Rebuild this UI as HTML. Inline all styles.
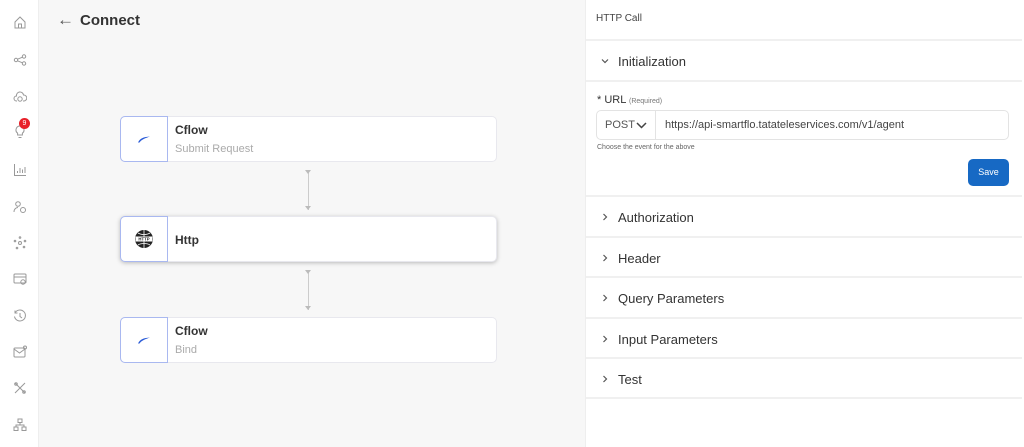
<!DOCTYPE html><html><head><style>
*{box-sizing:border-box;margin:0;padding:0}
body{width:1024px;height:447px;overflow:hidden;font-family:"Liberation Sans",sans-serif;background:#fff;position:relative;color:#333}
.sb{position:absolute;left:0;top:0;width:39px;height:447px;background:#fff;border-right:1px solid #eee}
.sb svg{position:absolute;left:13px;width:14px;height:14px;stroke:#999;fill:none;stroke-width:1}
.cv{position:absolute;left:39px;top:0;width:546px;height:447px;background:#f7f7f7}
.card{position:absolute;left:81px;width:377px;height:46px;background:#fff;border:1px solid #e8e8ee;border-radius:5px}
.card .ic{position:absolute;left:-1px;top:-1px;width:48px;height:46px;border:1px solid #a9b8f0;border-radius:5px 0 0 5px;background:#fff;display:flex;align-items:center;justify-content:center}
.t{position:absolute;left:54px;font-size:12px;color:#333;font-weight:bold}
.s{position:absolute;left:54px;top:26px;font-size:11px;color:#aaa}
.ln{position:absolute;left:269px;width:1px;background:#ccc}
.ln:before,.ln:after{content:"";position:absolute;left:-3px;border-left:3.5px solid transparent;border-right:3.5px solid transparent}
.ln:before{top:0;border-top:4px solid #bbb}
.ln:after{bottom:0;border-top:4px solid #bbb}
.rp{position:absolute;left:585px;top:0;width:439px;height:447px;background:#fff;border-left:1px solid #eee}
.sec{position:absolute;left:0;width:436px;border-top:2px solid #f0f0f0;font-size:13px;color:#333}
.sec span{position:absolute;left:32px}
.chev{position:absolute;left:14px}
</style></head><body>
<div class="sb">
<svg style="top:15px" viewBox="0 0 14 14"><path d="M2 7L7 2l5 5v6H2z"/><path d="M5.5 13V9h3v4"/></svg>
<svg style="top:53px" viewBox="0 0 14 14"><circle cx="3" cy="7" r="1.7"/><circle cx="11" cy="3.5" r="1.7"/><circle cx="11" cy="10.5" r="1.7"/><path d="M4.5 6.2l5-2M4.5 7.8l5 2"/></svg>
<svg style="top:90px" viewBox="0 0 14 14"><path d="M4 11H3.5a2.5 2.5 0 010-5A3.5 3.5 0 0110.5 5 2.5 2.5 0 0111 11H10"/><circle cx="7" cy="9" r="2.2"/></svg>
<svg style="top:125px" viewBox="0 0 14 14"><path d="M7 1a4 4 0 00-2.4 7.2V10h4.8V8.2A4 4 0 007 1zM5.5 12.5h3"/></svg>
<div style="position:absolute;left:19px;top:118px;width:11px;height:11px;border-radius:50%;background:#e8212a;color:#fff;font-size:7px;text-align:center;line-height:11px">9</div>
<svg style="top:163px" viewBox="0 0 14 14"><path d="M1.5 1v11.5H13M4.5 10V8M7 10V5M9.5 10V6.5M12 10V4"/></svg>
<svg style="top:200px" viewBox="0 0 14 14"><circle cx="5" cy="4" r="2.3"/><path d="M1 12c0-3 2-4.5 4-4.5"/><circle cx="10" cy="10" r="2.5"/></svg>
<svg style="top:236px" viewBox="0 0 14 14"><circle cx="7" cy="7" r="1.5"/><circle cx="2" cy="5" r=".8"/><circle cx="12" cy="5" r=".8"/><circle cx="4" cy="12" r=".8"/><circle cx="11" cy="11" r=".8"/><circle cx="7" cy="1.5" r=".8"/></svg>
<svg style="top:272px" viewBox="0 0 14 14"><rect x="1" y="2" width="12" height="9" rx="1"/><path d="M1 5h12"/><circle cx="10" cy="10" r="2.2"/></svg>
<svg style="top:309px" viewBox="0 0 14 14"><path d="M2 4a5.5 5.5 0 11-.5 3.5M2 1.5V4h2.5M7 4v3.5l2 1.5"/></svg>
<svg style="top:345px" viewBox="0 0 14 14"><rect x="1" y="3" width="11" height="9" rx="1"/><path d="M1 4l5.5 4L12 4"/><circle cx="12" cy="2.5" r="1.5"/></svg>
<svg style="top:381px" viewBox="0 0 14 14"><path d="M2 2l10 10M12 2L2 12"/><circle cx="3" cy="3" r="1.3"/><circle cx="11" cy="11" r="1.3"/></svg>
<svg style="top:418px" viewBox="0 0 14 14"><rect x="5" y="1" width="4" height="3.5"/><rect x="1" y="9" width="4" height="3.5"/><rect x="9" y="9" width="4" height="3.5"/><path d="M7 4.5V7M3 9V7h8v2"/></svg>
</div>
<div class="cv">
<div style="position:absolute;left:18px;top:10px;font-size:17px;color:#555">&#8592;</div>
<div style="position:absolute;left:41px;top:12px;font-size:15px;font-weight:bold;color:#333">Connect</div>
<div class="card" style="top:116px"><div class="ic"><svg width="14" height="8" viewBox="0 0 14 8"><path d="M1 7.5C3 3 7 2 13 1.5 9 3 5 4 2.5 7.5z" fill="#2a5bd7"/></svg></div><div class="t" style="top:6px">Cflow</div><div class="s">Submit Request</div></div>
<div class="ln" style="top:170px;height:40px"></div>
<div class="card" style="top:216px;box-shadow:0 1px 4px rgba(0,0,0,.25)"><div class="ic"><svg width="20" height="20" viewBox="0 0 20 20"><circle cx="10" cy="10" r="9" fill="#222"/><rect x="1.5" y="7.5" width="17" height="5" fill="#fff"/><text x="10" y="11.7" font-size="4.3" font-family="Liberation Sans" font-weight="bold" text-anchor="middle" fill="#222">HTTP</text><path d="M10 1v6.5M10 12.5V19M4 4c3 2 9 2 12 0M4 16c3-2 9-2 12 0" stroke="#fff" stroke-width=".8" fill="none"/></svg></div><div class="t" style="top:16px">Http</div></div>
<div class="ln" style="top:270px;height:40px"></div>
<div class="card" style="top:317px"><div class="ic"><svg width="14" height="8" viewBox="0 0 14 8"><path d="M1 7.5C3 3 7 2 13 1.5 9 3 5 4 2.5 7.5z" fill="#2a5bd7"/></svg></div><div class="t" style="top:6px">Cflow</div><div class="s">Bind</div></div>
</div>
<div class="rp">
<div style="position:absolute;left:10px;top:13px;font-size:10px;color:#444">HTTP Call</div>
<div class="sec" style="top:39px;height:42px"><svg class="chev" style="top:15px" width="10" height="10" viewBox="0 0 10 10"><path d="M2 3.5l3 3 3-3" stroke="#555" stroke-width="1.2" fill="none"/></svg><span style="top:13px">Initialization</span></div>
<div class="sec" style="top:80px;height:116px">
<div style="position:absolute;left:11px;top:12px;font-size:11px;color:#333">* URL <span style="position:static;font-size:7px;color:#777">(Required)</span></div>
<div style="position:absolute;left:10px;top:28px;width:413px;height:30px;border:1px solid #e3e3e3;border-radius:5px"></div>
<div style="position:absolute;left:69px;top:28px;width:1px;height:30px;background:#e3e3e3"></div>
<div style="position:absolute;left:19px;top:37px;font-size:11px;color:#555">POST</div>
<svg style="position:absolute;left:50px;top:38px" width="11" height="10" viewBox="0 0 11 10"><path d="M1 3l4.5 4.5L10 3" stroke="#444" stroke-width="1.5" fill="none"/></svg>
<div style="position:absolute;left:79px;top:37px;font-size:11px;color:#444">https://api-smartflo.tatateleservices.com/v1/agent</div>
<div style="position:absolute;left:11px;top:62px;font-size:7px;color:#666">Choose the event for the above</div>
<div style="position:absolute;left:382px;top:77px;width:41px;height:27px;background:#1769c4;border-radius:5px;color:#fff;font-size:9px;text-align:center;line-height:27px">Save</div>
</div>
<div class="sec" style="top:195px;height:42px"><svg class="chev" style="top:15px" width="10" height="10" viewBox="0 0 10 10"><path d="M3.5 2l3 3-3 3" stroke="#555" stroke-width="1.2" fill="none"/></svg><span style="top:13px">Authorization</span></div>
<div class="sec" style="top:236px;height:42px"><svg class="chev" style="top:15px" width="10" height="10" viewBox="0 0 10 10"><path d="M3.5 2l3 3-3 3" stroke="#555" stroke-width="1.2" fill="none"/></svg><span style="top:13px">Header</span></div>
<div class="sec" style="top:276px;height:42px"><svg class="chev" style="top:15px" width="10" height="10" viewBox="0 0 10 10"><path d="M3.5 2l3 3-3 3" stroke="#555" stroke-width="1.2" fill="none"/></svg><span style="top:13px">Query Parameters</span></div>
<div class="sec" style="top:317px;height:42px"><svg class="chev" style="top:15px" width="10" height="10" viewBox="0 0 10 10"><path d="M3.5 2l3 3-3 3" stroke="#555" stroke-width="1.2" fill="none"/></svg><span style="top:13px">Input Parameters</span></div>
<div class="sec" style="top:357px;height:42px;border-bottom:2px solid #f0f0f0"><svg class="chev" style="top:15px" width="10" height="10" viewBox="0 0 10 10"><path d="M3.5 2l3 3-3 3" stroke="#555" stroke-width="1.2" fill="none"/></svg><span style="top:13px">Test</span></div>
</div>
</body></html>
